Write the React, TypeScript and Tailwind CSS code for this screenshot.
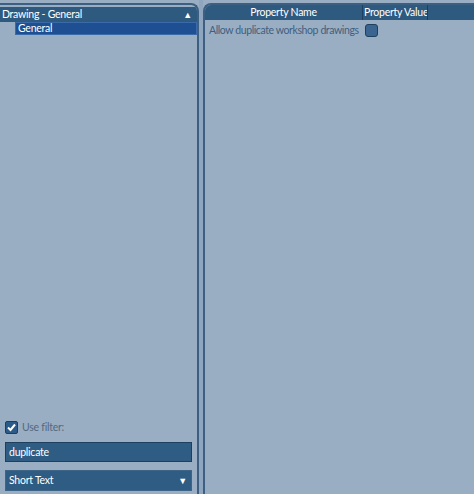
import React from "react";

export default function App() {
  const font = { fontFamily: 'Lato, "Noto Sans", sans-serif' };
  return (
    <div className="w-[474px] h-[494px] bg-[#9aaec3] flex overflow-hidden text-[10.5px] tracking-[-0.25px] leading-none whitespace-nowrap" style={font}>
      {/* Left panel */}
      <div className="w-[199px] h-full pt-[3px] flex flex-col">
        <div className="flex-1 flex flex-col border-2 border-l-0 border-b-0 border-[#3d5f82] rounded-tr-[8px] overflow-hidden">
          <div className="h-[15px] mt-[2px] bg-[#2f5a80] text-white flex items-center justify-between pl-[2px] pr-[5px]">
            <span>Drawing - General</span>
            <span className="text-[9px]">▲</span>
          </div>
          <div className="h-[13px] ml-[15px] bg-[#1d4f92] border border-[#3a6aa8] text-white flex items-center pl-[2px]">
            General
          </div>
          <div className="flex-1" />
          <div className="flex items-center gap-[4px] pl-[5px] mb-[8px]">
            <div className="w-[13px] h-[13px] bg-[#2b5b88] border border-[#1e3f60] rounded-[2px] flex items-center justify-center">
              <svg width="11" height="11" viewBox="0 0 11 11">
                <path d="M2 5.5 L4.5 8 L9 2.5" stroke="white" strokeWidth="2" fill="none" />
              </svg>
            </div>
            <span className="text-[#53697f]">Use filter:</span>
          </div>
          <div className="mx-[5px] h-[20px] bg-[#2f5c83] border border-[#1f3f5f] text-white flex items-center pl-[3px] mb-[8px]">
            duplicate
          </div>
          <div className="mx-[5px] h-[21px] bg-[#2f5c83] border border-[#3e6488] text-white flex items-center justify-between pl-[3px] pr-[4px] mb-[3px]">
            <span>Short Text</span>
            <span className="text-[9px]">▼</span>
          </div>
        </div>
      </div>
      {/* Splitter */}
      <div className="w-[4px] h-full bg-[#8ea6c0]" />
      {/* Right panel */}
      <div className="flex-1 h-full pt-[3px] flex flex-col">
        <div className="flex-1 flex flex-col border-2 border-r-0 border-b-0 border-[#3d5f82] rounded-tl-[8px] overflow-hidden">
          <div className="h-[15px] bg-[#2f5a80] text-white flex">
            <div className="w-[158px] flex items-center justify-center border-r border-[#1f3f5f]">Property Name</div>
            <div className="w-[65px] flex items-center pl-[1px] border-r border-[#1f3f5f] overflow-hidden">Property Value</div>
            <div className="flex-1" />
          </div>
          <div className="flex items-center h-[17px] mt-[2px]">
            <div className="w-[158px] pl-[4px] text-[#3f5f80] tracking-[-0.4px]">Allow duplicate workshop drawings</div>
            <div className="pl-[2px]">
              <div className="w-[13px] h-[13px] bg-[#3a6590] border border-[#1f3f5f] rounded-[3px]" />
            </div>
          </div>
          <div className="flex-1" />
        </div>
      </div>
    </div>
  );
}
